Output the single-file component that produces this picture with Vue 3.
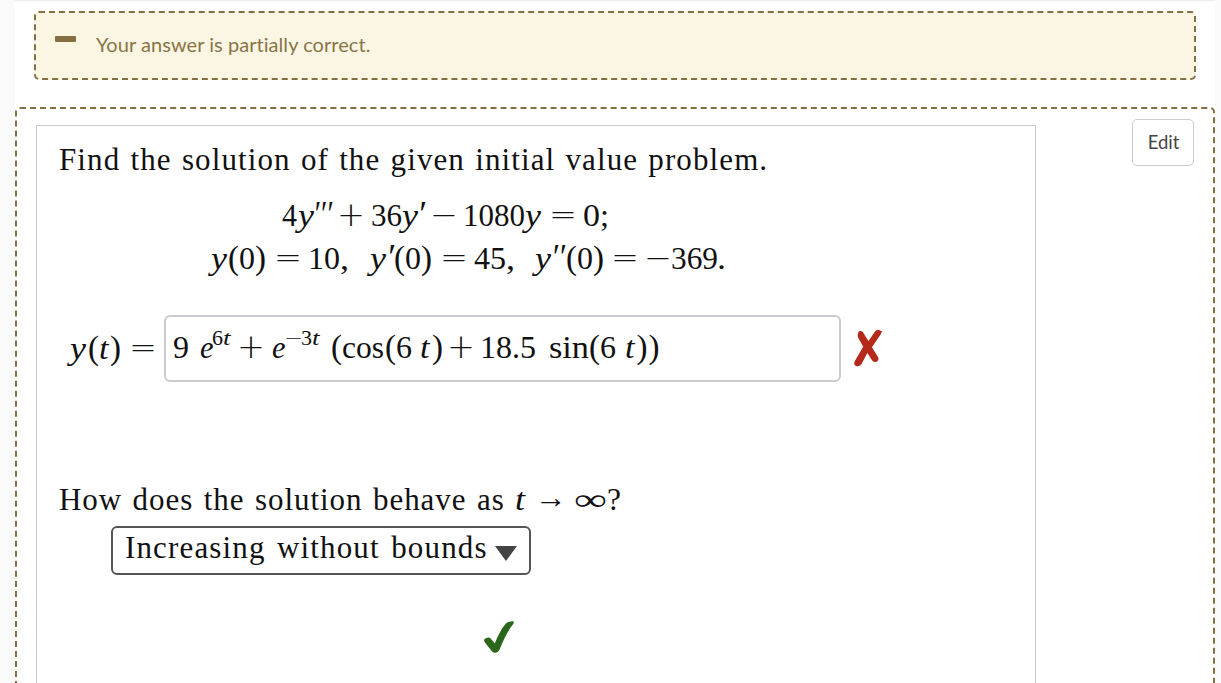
<script setup>
// Each run is one piece of a typeset line: x, advance width, text, style
const equation = [
  { x: 282, w: 15, t: '4' },
  { x: 298, w: 16, t: 'y', c: 'var' },
  { x: 313, w: 19, t: '′′′', c: 'prime' },
  { x: 337, w: 28, t: '+', c: 'op' },
  { x: 371, w: 31, t: '36' },
  { x: 402, w: 16, t: 'y', c: 'var' },
  { x: 417, w: 8, t: '′', c: 'prime' },
  { x: 430, w: 28, t: '−', c: 'op' },
  { x: 463, w: 62, t: '1080' },
  { x: 525, w: 16, t: 'y', c: 'var' },
  { x: 549, w: 28, t: '=', c: 'op' },
  { x: 583, w: 17, t: '0' },
  { x: 600, w: 9, t: ';' },
]

const conditions = [
  { x: 211, w: 16, t: 'y', c: 'var' },
  { x: 228, w: 11, t: '(', c: 'paren' },
  { x: 239, w: 16, t: '0' },
  { x: 255, w: 11, t: ')', c: 'paren' },
  { x: 274, w: 28, t: '=', c: 'op' },
  { x: 308, w: 32, t: '10' },
  { x: 340, w: 9, t: ',' },
  { x: 370, w: 16, t: 'y', c: 'var' },
  { x: 386, w: 8, t: '′', c: 'prime' },
  { x: 394, w: 11, t: '(', c: 'paren' },
  { x: 405, w: 16, t: '0' },
  { x: 421, w: 11, t: ')', c: 'paren' },
  { x: 440, w: 28, t: '=', c: 'op' },
  { x: 474, w: 32, t: '45' },
  { x: 506, w: 9, t: ',' },
  { x: 535, w: 16, t: 'y', c: 'var' },
  { x: 551, w: 14, t: '′′', c: 'prime' },
  { x: 566, w: 11, t: '(', c: 'paren' },
  { x: 577, w: 16, t: '0' },
  { x: 593, w: 11, t: ')', c: 'paren' },
  { x: 611, w: 28, t: '=', c: 'op' },
  { x: 644, w: 28, t: '−', c: 'op' },
  { x: 671, w: 47, t: '369' },
  { x: 717, w: 9, t: '.' },
]

const label = [
  { x: 70, w: 16, t: 'y', c: 'var' },
  { x: 88, w: 11, t: '(', c: 'paren' },
  { x: 99, w: 9.5, t: 't', c: 'var' },
  { x: 110, w: 11, t: ')', c: 'paren' },
  { x: 129, w: 28, t: '=', c: 'op' },
]

const answer = [
  { x: 173, w: 16, t: '9' },
  { x: 200, w: 13.5, t: 'e', c: 'var' },
  { x: 212, w: 11, t: '6', c: 'sup' },
  { x: 223, w: 7.5, t: 't', c: 'sup var' },
  { x: 237, w: 28, t: '+', c: 'op' },
  { x: 272, w: 13.5, t: 'e', c: 'var' },
  { x: 284, w: 19, t: '−', c: 'sup op' },
  { x: 301, w: 11, t: '3', c: 'sup' },
  { x: 312, w: 7.5, t: 't', c: 'sup var' },
  { x: 331, w: 11, t: '(', c: 'paren' },
  { x: 342, w: 42, t: 'cos' },
  { x: 385, w: 11, t: '(', c: 'paren' },
  { x: 396, w: 16, t: '6' },
  { x: 420, w: 9.5, t: 't', c: 'var' },
  { x: 432, w: 11, t: ')', c: 'paren' },
  { x: 447, w: 28, t: '+', c: 'op' },
  { x: 480, w: 56, t: '18.5' },
  { x: 549, w: 40, t: 'sin' },
  { x: 589, w: 11, t: '(', c: 'paren' },
  { x: 600, w: 16, t: '6' },
  { x: 625, w: 9.5, t: 't', c: 'var' },
  { x: 636.5, w: 11, t: ')', c: 'paren' },
  { x: 648.5, w: 11, t: ')', c: 'paren' },
]

const limit = [
  { x: 515, w: 10, t: 't', c: 'var' },
  { x: 535, w: 32, t: '→', c: 'arrow' },
  { x: 574, w: 33, t: '∞' },
  { x: 607, w: 14, t: '?' },
]

function baseline(run) {
  if (run.c === 'arrow') return 31
  return run.c && run.c.includes('sup') ? 20 : 33
}
</script>

<template>
  <div class="page">
    <div class="notice">
      <span class="notice__dash" aria-hidden="true" />
      <span class="notice__text">Your answer is partially correct.</span>
    </div>

    <div class="panel">
      <section class="question">
        <p class="prose prose--intro">Find the solution of the given initial value problem.</p>

        <svg class="math math--equation" viewBox="37 0 998 43" width="998" height="43">
          <text v-for="r in equation" :key="r.x" :x="r.x" :y="baseline(r)" :textLength="r.w" lengthAdjust="spacingAndGlyphs" :class="r.c">{{ r.t }}</text>
        </svg>
        <svg class="math" viewBox="37 0 998 43" width="998" height="43">
          <text v-for="r in conditions" :key="r.x" :x="r.x" :y="baseline(r)" :textLength="r.w" lengthAdjust="spacingAndGlyphs" :class="r.c">{{ r.t }}</text>
        </svg>

        <div class="answer">
          <svg class="math math--label" viewBox="37 0 127 43" width="127" height="43">
            <text v-for="r in label" :key="r.x" :x="r.x" :y="baseline(r)" :textLength="r.w" lengthAdjust="spacingAndGlyphs" :class="r.c">{{ r.t }}</text>
          </svg>
          <div class="answer__field">
            <svg class="math" viewBox="166 0 673 43" width="673" height="43">
              <text v-for="r in answer" :key="r.x" :x="r.x" :y="baseline(r)" :textLength="r.w" lengthAdjust="spacingAndGlyphs" :class="r.c">{{ r.t }}</text>
            </svg>
          </div>
          <svg class="cross" viewBox="0 0 28 38" width="28" height="38" aria-label="Incorrect">
            <path d="M4 5Q4 1.5 7 2Q9 2 10 5L14.5 12L21 2.5Q23 .2 25 1L28 2.2L26.5 5.7L17.9 18.3L24.3 28.5Q25.3 32 22 33Q19.7 33.4 18 31.2L13.3 24L7.4 35.2Q5 38.2 2 37Q-.8 35.8 .7 32.3L9.2 17.8L4.2 8.8Q3.4 7 4 5Z" />
          </svg>
        </div>

        <div class="behave">
          <p class="prose prose--behave">How does the solution behave as</p>
          <svg class="math" viewBox="515 0 110 43" width="110" height="43">
            <text v-for="r in limit" :key="r.x" :x="r.x" :y="baseline(r)" :textLength="r.w" lengthAdjust="spacingAndGlyphs" :class="r.c">{{ r.t }}</text>
          </svg>
        </div>

        <button class="select" type="button">
          <span class="prose prose--select">Increasing without bounds</span>
          <svg class="select__caret" viewBox="0 0 22 15" width="22" height="15"><path d="M0 0H22L11 15Z" /></svg>
        </button>

        <svg class="check" viewBox="0 0 30 32" width="30" height="32" aria-label="Correct">
          <path d="M.3 18.2Q2.8 16 6 16.7L10.8 22.5Q15.5 10 21.7 2.7Q24.5.2 29.3.2Q30.5.8 29.2 3Q22 12 15.6 28.5Q14 31.8 11.5 31.7Q9 32 7.6 30L.6 21Q-.3 19.5.3 18.2Z" />
        </svg>
      </section>

      <button class="edit" type="button">Edit</button>
    </div>
  </div>
</template>

<style>
body {
  background: #fafafa;
  overflow: hidden;
}
</style>

<style scoped>
.page {
  box-sizing: border-box;
  width: 1200px;
  height: 683px;
  margin-left: 15px;
  padding-top: 10px;
  overflow: hidden;
  border-top: 1px solid #ececec;
  background: #fff;
  font-family: Lato, sans-serif;
}

.notice {
  box-sizing: border-box;
  display: flex;
  align-items: flex-start;
  width: 1162px;
  height: 69px;
  margin-left: 19px;
  padding: 20px 19px;
  border: 2px dashed #846f42;
  border-radius: 5px;
  background: #faf6e3;
  color: #897446;
}

.notice__dash {
  width: 21px;
  height: 6px;
  margin: 3px 20px 0 0;
  border-radius: 1px;
  background: #846f42;
}

.notice__text {
  font-size: 20px;
  font-variant-ligatures: none;
  letter-spacing: 0.05px;
  line-height: 22px;
  white-space: nowrap;
}

.panel {
  box-sizing: border-box;
  display: flex;
  justify-content: space-between;
  align-items: flex-start;
  height: 700px;
  margin-top: 27px;
  padding: 10px 19px 0;
  border: 2px dashed #846f42;
  border-radius: 5px;
}

.question {
  box-sizing: border-box;
  width: 1000px;
  height: 680px;
  margin-top: 6px;
  border: 1px solid #ccc;
  color: #111;
}

.prose {
  margin: 0;
  font-family: 'Liberation Serif', serif;
  font-size: 31px;
  line-height: 40px;
  white-space: nowrap;
}

.prose--intro {
  padding: 14px 0 0 22px;
  letter-spacing: 1.1px;
  word-spacing: 1.4px;
}

.math {
  display: block;
  flex: none;
  font-family: 'Liberation Serif', serif;
  font-size: 31px;
  fill: #111;
}

.math--equation {
  margin-top: 13px;
}

.math--label {
  margin-bottom: 3px;
}

.var {
  font-style: italic;
}

.paren {
  font-size: 33px;
}

.op {
  font-family: 'DejaVu Sans', sans-serif;
  font-size: 33px;
  font-weight: 200;
}

.prime {
  font-style: italic;
  font-size: 35px;
}

.sup {
  font-size: 22px;
}

.answer {
  display: flex;
  align-items: center;
  margin-top: 36px;
}

.answer__field {
  box-sizing: border-box;
  width: 677px;
  height: 67px;
  padding-top: 8px;
  border: 2px solid #cbcbcf;
  border-radius: 6px;
}

.cross {
  margin: 0 0 2px 13px;
  fill: #b5291b;
}

.behave {
  display: flex;
  align-items: flex-start;
  margin-top: 95px;
}

.prose--behave {
  box-sizing: border-box;
  width: 478px;
  padding: 3px 0 0 22px;
  letter-spacing: 0.95px;
  word-spacing: 1.8px;
}

.select {
  box-sizing: border-box;
  display: flex;
  align-items: flex-start;
  width: 420px;
  height: 49px;
  margin: 6px 0 0 74px;
  padding: 0 12px;
  border: 2px solid #555;
  border-radius: 6px;
  background: #fff;
  color: #111;
}

.prose--select {
  width: 370px;
  text-align: left;
  letter-spacing: 1.15px;
  word-spacing: 2.5px;
}

.select__caret {
  flex: none;
  margin-top: 18px;
  fill: #444;
}

.check {
  display: block;
  margin: 46px 0 0 447px;
  fill: #2b661b;
}

.edit {
  width: 62px;
  height: 47px;
  padding: 0 0 1px 1px;
  border: 1px solid #ccc;
  border-radius: 5px;
  background: #fff;
  color: #444;
  font-family: inherit;
  font-size: 18.5px;
}
</style>
